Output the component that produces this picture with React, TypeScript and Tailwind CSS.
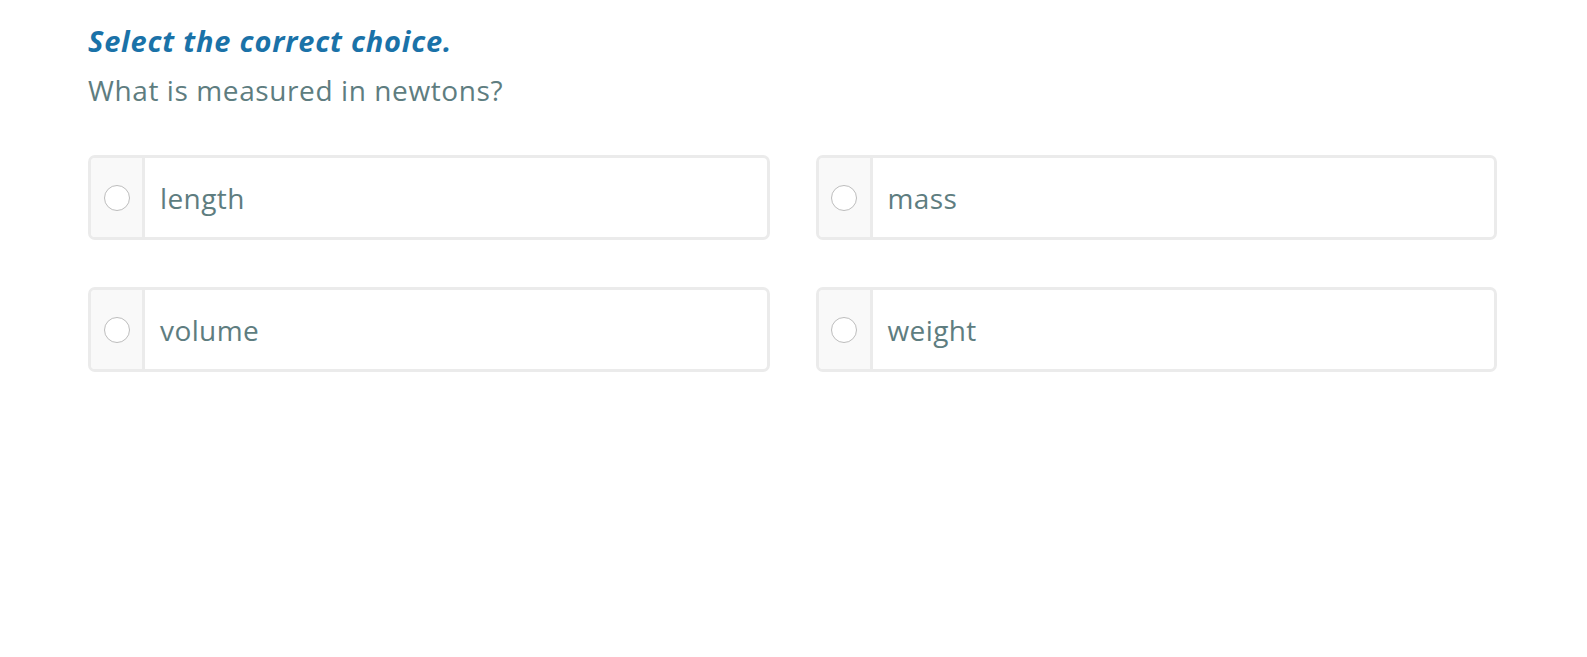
const choices = ["length", "mass", "volume", "weight"];

function Choice({ label }: { label: string }) {
  return (
    <label className="flex h-[85px] cursor-pointer overflow-hidden rounded-[7px] border-[3px] border-[#ebebeb] bg-white">
      <div className="flex w-[54px] shrink-0 items-center justify-center border-r-[3px] border-[#ebebeb] bg-[#f9f9f9]">
        <span className="block h-[26px] w-[26px] rounded-full border border-[#bdbdbd] bg-white" />
      </div>
      <div className="flex items-center pl-[15px] text-[28px] tracking-[0.4px] text-[#5e7d80]">{label}</div>
    </label>
  );
}

export default function App() {
  return (
    <div className="min-h-screen bg-white font-['Open_Sans',sans-serif]">
      <div className="ml-[88px] w-[1409px] pt-[22px]">
        <h1 className="text-[29px] font-bold italic leading-[38px] tracking-[0.8px] text-[#1a72a8]">Select the correct choice.</h1>
        <p className="mt-[12px] text-[28px] leading-[36px] tracking-[0.6px] text-[#5e7d80]">What is measured in newtons?</p>
        <div className="mt-[47px] grid grid-cols-2 gap-x-[46px] gap-y-[47px]">
          {choices.map((c) => (
            <Choice key={c} label={c} />
          ))}
        </div>
      </div>
    </div>
  );
}
